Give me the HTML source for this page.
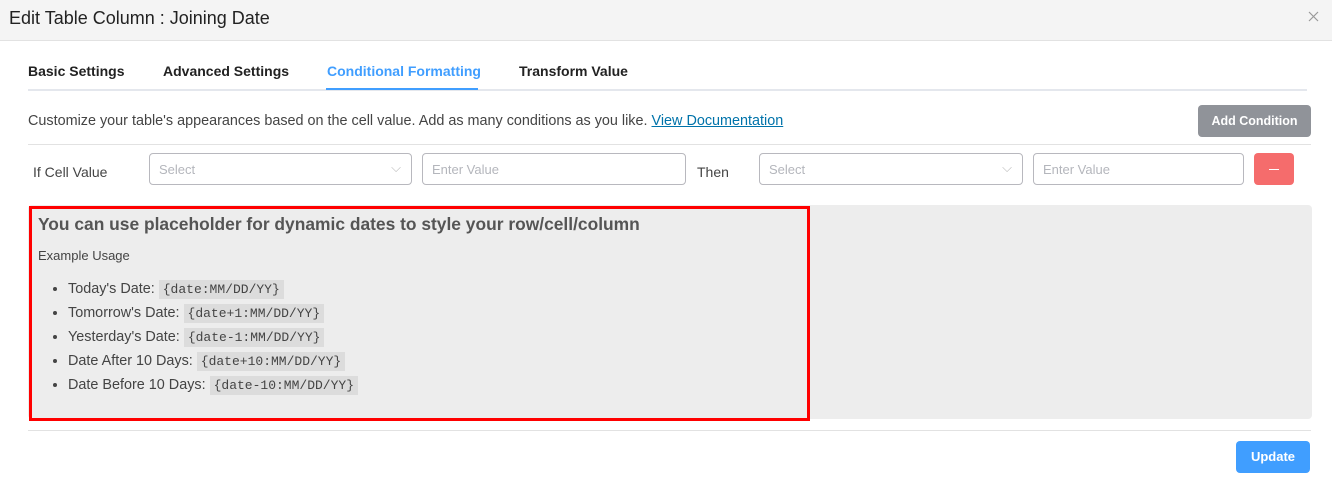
<!DOCTYPE html>
<html><head><meta charset="utf-8"><style>
*{box-sizing:border-box;margin:0;padding:0}
body{width:1332px;height:504px;background:#fff;font-family:"Liberation Sans",sans-serif;position:relative;overflow:hidden;color:#333}
.a{position:absolute}
.hdr{left:0;top:0;width:1332px;height:41px;background:#f4f4f4;border-bottom:1px solid #e2e2e2}
.tab{top:63px;font-size:14px;font-weight:bold;color:#222}
.inp{height:32px;border:1px solid #b8b8be;border-radius:4px;font-size:13px;color:#b4b6bc;padding:8px 9px}
.code{font-family:"Liberation Mono",monospace;font-size:13px;background:#dcdcdc;padding:2px 4px;color:#444}
li{height:24px;line-height:24px;font-size:14.4px;color:#444}
</style></head><body>
<div class="a hdr"></div>
<div class="a" style="left:9px;top:8px;font-size:18px;color:#222">Edit Table Column : Joining Date</div>
<svg class="a" style="left:1308px;top:11px" width="11" height="11"><path d="M1 1L10 10M10 1L1 10" stroke="#999" stroke-width="1.2"/></svg>
<div class="a tab" style="left:28px">Basic Settings</div>
<div class="a tab" style="left:163px">Advanced Settings</div>
<div class="a tab" style="left:327px;color:#409eff">Conditional Formatting</div>
<div class="a tab" style="left:519px">Transform Value</div>
<div class="a" style="left:28px;top:89px;width:1279px;height:2px;background:#e4e7ed"></div>
<div class="a" style="left:326px;top:88px;width:152px;height:2px;background:#409eff"></div>
<div class="a" style="left:28px;top:113px;font-size:14.4px;color:#444">Customize your table's appearances based on the cell value. Add as many conditions as you like. <span style="color:#0073aa;text-decoration:underline">View Documentation</span></div>
<div class="a" style="left:1198px;top:105px;width:113px;height:32px;background:#909399;border-radius:4px;color:#fff;font-size:12.5px;font-weight:bold;text-align:center;line-height:32px">Add Condition</div>
<div class="a" style="left:28px;top:144px;width:1283px;height:1px;background:#e2e2e2"></div>
<div class="a" style="left:33px;top:164px;font-size:14px;color:#444">If Cell Value</div>
<div class="a inp" style="left:149px;top:153px;width:263px">Select<span style="position:absolute;right:10px;top:6px;color:#bbb">⌵</span></div>
<div class="a inp" style="left:422px;top:153px;width:264px">Enter Value</div>
<div class="a" style="left:697px;top:164px;font-size:14px;color:#444">Then</div>
<div class="a inp" style="left:759px;top:153px;width:264px">Select<span style="position:absolute;right:10px;top:6px;color:#bbb">⌵</span></div>
<div class="a inp" style="left:1033px;top:153px;width:211px">Enter Value</div>
<div class="a" style="left:1254px;top:153px;width:40px;height:32px;background:#f56c6c;border-radius:4px"><div style="position:absolute;left:15px;top:16px;width:10px;height:1px;background:#fff"></div></div>
<div class="a" style="left:28px;top:205px;width:1284px;height:214px;background:#ededed;border-radius:4px"></div>
<div class="a" style="left:29px;top:206px;width:781px;height:215px;border:3px solid #f00"></div>
<div class="a" style="left:38px;top:214px;font-size:17.4px;font-weight:bold;color:#555">You can use placeholder for dynamic dates to style your row/cell/column</div>
<div class="a" style="left:38px;top:248px;font-size:13px;color:#444">Example Usage</div>
<ul class="a" style="left:68px;top:277px;list-style:disc">
<li>Today's Date: <span class="code">{date:MM/DD/YY}</span></li>
<li>Tomorrow's Date: <span class="code">{date+1:MM/DD/YY}</span></li>
<li>Yesterday's Date: <span class="code">{date-1:MM/DD/YY}</span></li>
<li>Date After 10 Days: <span class="code">{date+10:MM/DD/YY}</span></li>
<li>Date Before 10 Days: <span class="code">{date-10:MM/DD/YY}</span></li>
</ul>
<div class="a" style="left:28px;top:430px;width:1283px;height:1px;background:#e2e2e2"></div>
<div class="a" style="left:1236px;top:441px;width:74px;height:32px;background:#409eff;border-radius:4px;color:#fff;font-size:13px;font-weight:bold;text-align:center;line-height:32px">Update</div>
</body></html>
